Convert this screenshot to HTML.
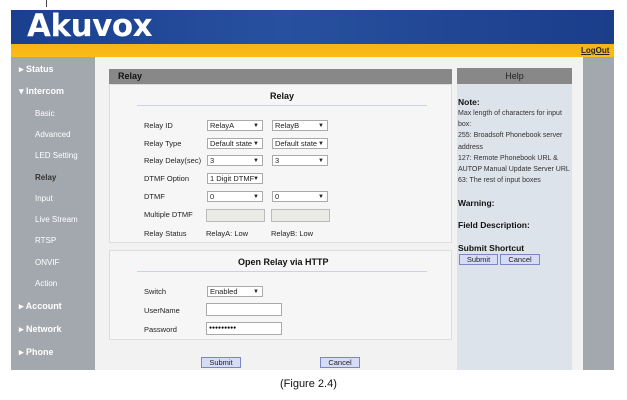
<!DOCTYPE html><html><head><style>
*{margin:0;padding:0;box-sizing:border-box}
body{width:627px;height:400px;background:#fff;position:relative;font-family:"Liberation Sans",Tahoma,sans-serif;overflow:hidden}
.a{position:absolute}
.sb{color:#fff;font-size:9px;font-weight:bold}
.sub{color:#fff;font-size:8px}
.lbl{font-size:7.5px;color:#222}
.sel{position:absolute;height:11px;background:#fff;border:1px solid #aaa;font-size:7.5px;line-height:9px;padding-left:2px;color:#222}
.sel:after{content:"▼";position:absolute;right:3px;top:1px;font-size:6px}
.btn{position:absolute;height:11px;background:#d7dcf5;border:1px solid #7b86c8;font-size:7.5px;line-height:9px;text-align:center;color:#222}
</style></head><body>
<div class="a" style="left:46px;top:0;width:1px;height:7px;background:#444"></div>
<div class="a" style="left:11px;top:10px;width:603px;height:34px;background:linear-gradient(90deg,#1a3f8f,#27519e 45%,#1b3d8a)"></div>
<div class="a" style="left:27px;top:8px;color:#fff;font-size:31px;font-weight:bold;font-family:'DejaVu Sans',sans-serif;letter-spacing:-0.5px">Akuvox</div>
<div class="a" style="left:11px;top:44px;width:603px;height:13px;background:linear-gradient(#f7b317,#fbbd13)"></div>
<div class="a" style="left:581px;top:46px;font-size:8px;font-weight:bold;text-decoration:underline;color:#222">LogOut</div>
<div class="a" style="left:11px;top:57px;width:84px;height:313px;background:#a3a7ae"></div>
<div class="a" style="left:95px;top:57px;width:488px;height:313px;background:#f2f2f2"></div>
<div class="a" style="left:583px;top:57px;width:31px;height:313px;background:#a3a7ae"></div>
<div class="a sb" style="left:19px;top:64px">▸ Status</div>
<div class="a sb" style="left:19px;top:86px">▾ Intercom</div>
<div class="a sub" style="left:35px;top:109px">Basic</div>
<div class="a sub" style="left:35px;top:130px">Advanced</div>
<div class="a sub" style="left:35px;top:151px">LED Setting</div>
<div class="a sub" style="left:35px;top:173px;color:#333;font-weight:bold">Relay</div>
<div class="a sub" style="left:35px;top:194px">Input</div>
<div class="a sub" style="left:35px;top:215px">Live Stream</div>
<div class="a sub" style="left:35px;top:236px">RTSP</div>
<div class="a sub" style="left:35px;top:258px">ONVIF</div>
<div class="a sub" style="left:35px;top:279px">Action</div>
<div class="a sb" style="left:19px;top:301px">▸ Account</div>
<div class="a sb" style="left:19px;top:324px">▸ Network</div>
<div class="a sb" style="left:19px;top:347px">▸ Phone</div>

<div class="a" style="left:109px;top:69px;width:343px;height:15px;background:#888"></div>
<div class="a" style="left:118px;top:71px;font-size:9px;font-weight:bold;color:#111">Relay</div>
<div class="a" style="left:109px;top:84px;width:343px;height:159px;background:#f6f6f6;border:1px solid #ddd"></div>
<div class="a" style="left:270px;top:91px;font-size:9px;font-weight:bold;color:#111">Relay</div>
<div class="a" style="left:137px;top:105px;width:290px;height:1px;background:#c9d3e6"></div>
<div class="a lbl" style="left:144px;top:121px">Relay ID</div>
<div class="a lbl" style="left:144px;top:139px">Relay Type</div>
<div class="a lbl" style="left:144px;top:156px">Relay Delay(sec)</div>
<div class="a lbl" style="left:144px;top:174px">DTMF Option</div>
<div class="a lbl" style="left:144px;top:192px">DTMF</div>
<div class="a lbl" style="left:144px;top:210px">Multiple DTMF</div>
<div class="a lbl" style="left:144px;top:229px">Relay Status</div>
<div class="sel" style="left:207px;top:120px;width:56px">RelayA</div>
<div class="sel" style="left:272px;top:120px;width:56px">RelayB</div>
<div class="sel" style="left:207px;top:138px;width:56px">Default state</div>
<div class="sel" style="left:272px;top:138px;width:56px">Default state</div>
<div class="sel" style="left:207px;top:155px;width:56px">3</div>
<div class="sel" style="left:272px;top:155px;width:56px">3</div>
<div class="sel" style="left:207px;top:173px;width:56px">1 Digit DTMF</div>
<div class="sel" style="left:207px;top:191px;width:56px">0</div>
<div class="sel" style="left:272px;top:191px;width:56px">0</div>
<div class="a" style="left:206px;top:209px;width:59px;height:13px;background:#ebebe6;border:1px solid #bbb"></div>
<div class="a" style="left:271px;top:209px;width:59px;height:13px;background:#ebebe6;border:1px solid #bbb"></div>
<div class="a lbl" style="left:206px;top:229px">RelayA: Low</div>
<div class="a lbl" style="left:271px;top:229px">RelayB: Low</div>

<div class="a" style="left:109px;top:250px;width:343px;height:90px;background:#f6f6f6;border:1px solid #ddd"></div>
<div class="a" style="left:238px;top:257px;font-size:9px;font-weight:bold;color:#111">Open Relay via HTTP</div>
<div class="a" style="left:137px;top:271px;width:290px;height:1px;background:#c9d3e6"></div>
<div class="a lbl" style="left:144px;top:287px">Switch</div>
<div class="a lbl" style="left:144px;top:306px">UserName</div>
<div class="a lbl" style="left:144px;top:325px">Password</div>
<div class="sel" style="left:207px;top:286px;width:56px">Enabled</div>
<div class="a" style="left:206px;top:303px;width:76px;height:13px;background:#fff;border:1px solid #aaa"></div>
<div class="a" style="left:206px;top:322px;width:76px;height:13px;background:#fff;border:1px solid #aaa;font-size:5px;line-height:11px;padding-left:2px">●●●●●●●●●</div>
<div class="btn" style="left:201px;top:357px;width:40px">Submit</div>
<div class="btn" style="left:320px;top:357px;width:40px">Cancel</div>

<div class="a" style="left:457px;top:68px;width:115px;height:16px;background:#888;color:#222;font-size:9px;text-align:center;line-height:16px">Help</div>
<div class="a" style="left:457px;top:84px;width:115px;height:286px;background:#dce3ea"></div>
<div class="a" style="left:458px;top:97px;font-size:8.5px;font-weight:bold;color:#111">Note:</div>
<div class="a" style="left:458px;top:108px;width:114px;font-size:7px;line-height:11.2px;color:#333">Max length of characters for input box:<br>255: Broadsoft Phonebook server address<br>127: Remote Phonebook URL &amp; AUTOP Manual Update Server URL<br>63: The rest of input boxes</div>
<div class="a" style="left:458px;top:198px;font-size:8.5px;font-weight:bold;color:#111">Warning:</div>
<div class="a" style="left:458px;top:220px;font-size:8.5px;font-weight:bold;color:#111">Field Description:</div>
<div class="a" style="left:458px;top:243px;font-size:8.5px;font-weight:bold;color:#111">Submit Shortcut</div>
<div class="btn" style="left:459px;top:254px;width:39px">Submit</div>
<div class="btn" style="left:500px;top:254px;width:40px">Cancel</div>

<div class="a" style="left:280px;top:378px;font-size:11px;font-family:'Liberation Sans',sans-serif;color:#111">(Figure 2.4)</div>
</body></html>
